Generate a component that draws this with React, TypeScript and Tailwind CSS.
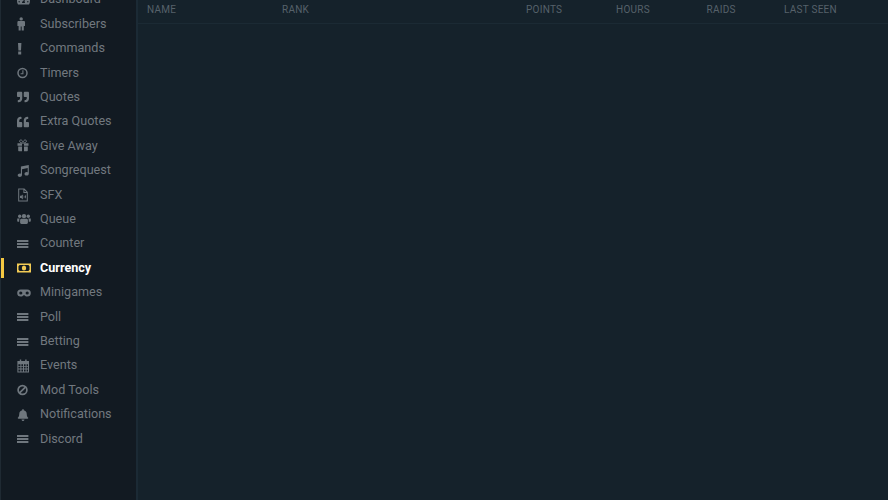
import React from "react";
import { FaQuoteRight, FaQuoteLeft, FaBell, FaTachometerAlt } from "react-icons/fa";

type IconProps = { className?: string };

const Svg = ({ className, children }: IconProps & { children: React.ReactNode }) => (
  <svg viewBox="0 0 14 14" className={className} fill="currentColor">
    {children}
  </svg>
);

const Male = (p: IconProps) => (
  <Svg {...p}>
    <circle cx="4.2" cy="1.9" r="1.7" />
    <path d="M1.6 4h5.2c.7 0 1.2.5 1.2 1.2V9H6.8v4.6H4.7V9.6h-1v4H1.6V9H.4V5.2C.4 4.5.9 4 1.6 4z" />
  </Svg>
);
const Excl = (p: IconProps) => (
  <Svg {...p}>
    <path d="M1 1h3.4l-.4 7.4H1.4zM1.2 9.6h3V12.4h-3z" />
  </Svg>
);
const Clock = (p: IconProps) => (
  <Svg {...p}>
    <circle cx="5.5" cy="7" r="4.5" fill="none" stroke="currentColor" strokeWidth="1.5" />
    <path d="M5.9 4.300v3.400H3.600" fill="none" stroke="currentColor" strokeWidth="1.1" />
  </Svg>
);
const Gift = (p: IconProps) => (
  <Svg {...p}>
    <path d="M.5 4.2h11v2.6H7V4.6H5v2.2H.5zM1.2 7.6H5v4.6H2.2c-.6 0-1-.4-1-1zM7 7.6h3.8v3.6c0 .6-.4 1-1 1H7z" />
    <path d="M6 4C4.5 4 2.6 3.6 2.6 2.2 2.6 1.3 3.3 1 3.9 1 5 1 5.700 2.300 6 3 6.300 2.300 7 1 8.100 1c.6 0 1.300.3 1.300 1.200C9.400 3.600 7.500 4 6 4z" fill="none" stroke="currentColor" strokeWidth="1" />
  </Svg>
);
const Music = (p: IconProps) => (
  <Svg {...p}>
    <path d="M11.800 1v8.700c0 1.200-1.100 1.900-2.200 1.900s-2.100-.7-2.100-1.700 1-1.800 2.100-1.800c.4 0 .8.100 1.100.3V4L5 5.200V11c0 1.200-1.100 1.900-2.200 1.900S.7 12.200.7 11.200s1-1.800 2.100-1.800c.4 0 .8.100 1.100.3V2.600z" />
  </Svg>
);
const FileAudio = (p: IconProps) => (
  <Svg {...p}>
    <path d="M1.200.6h6.200l3.400 3.400v9.400H1.200zM2.200 1.600v10.800h7.600V5H6.400V1.600zM7.400 2v2h2z" fillRule="evenodd" />
    <path d="M3 7.800h1.200L5.800 6.400v5L4.200 10H3zM6.800 7.400c.9.600.9 2.200 0 2.800zM8 6.800c1.400 1 1.400 3 0 4z" />
  </Svg>
);
const Users = (p: IconProps) => (
  <Svg {...p}>
    <circle cx="2.700" cy="4.300" r="1.700" />
    <circle cx="11.300" cy="4.300" r="1.700" />
    <circle cx="7" cy="4.100" r="2.200" />
    <path d="M.2 6.600h2.600c-.5.700-.6 1.500-.6 2.300v.9H1.300C.6 9.800.2 9.400.2 8.800zM13.800 6.600h-2.600c.5.700.6 1.500.6 2.300v.9h.9c.7 0 1.100-.4 1.100-1z" />
    <path d="M4.300 6.800h5.400c.8 0 1.200.7 1.200 1.700v2.100c0 .9-.5 1.400-1.300 1.400H4.400c-.8 0-1.300-.5-1.300-1.400V8.500c0-1 .4-1.700 1.200-1.700z" />
  </Svg>
);
const Bars = (p: IconProps) => (
  <Svg {...p}>
    <path d="M0 2.900h11.400v2H0zM0 6h11.400v2H0zM0 9.100h11.400v2H0z" />
  </Svg>
);
const Money = (p: IconProps) => (
  <Svg {...p}>
    <path fillRule="evenodd" d="M0 2.400h14v9.200H0zM2.600 4.100 1.500 5.300v3.400l1.100 1.200h8.800l1.100-1.200V5.300l-1.100-1.200z" />
    <ellipse cx="7" cy="7" rx="2.200" ry="2.500" />
  </Svg>
);
const Pad = (p: IconProps) => (
  <Svg {...p}>
    <path fillRule="evenodd" d="M3.800 3.400h6.400a3.600 3.600 0 0 1 0 7.200c-1.300 0-2-.6-2.700-1.300h-1c-.7.7-1.400 1.300-2.700 1.300a3.600 3.600 0 0 1 0-7.200zm0 2a1.600 1.600 0 1 0 0 3.200 1.600 1.600 0 0 0 0-3.200zm6.400 0a1.600 1.600 0 1 0 0 3.200 1.600 1.600 0 0 0 0-3.200z" />
  </Svg>
);
const Calendar = (p: IconProps) => (
  <Svg {...p}>
    <path fillRule="evenodd" d="M.4 2h11.600v11.400H.4zM1.400 5.200v1.700h2V5.200zm3 0v1.700h1.600V5.200zm2.600 0v1.700h1.600V5.200zm2.600 0v1.700h1.400V5.200zM1.400 7.800v1.700h2V7.800zm3 0v1.700h1.600V7.800zm2.600 0v1.700h1.600V7.800zm2.600 0v1.700h1.400V7.800zM1.400 10.400v2h2v-2zm3 0v2h1.600v-2zm2.600 0v2h1.600v-2zm2.600 0v2h1.400v-2z" />
    <path d="M2.800.6h1.400v2.800H2.800zM8.200.6h1.400v2.800H8.200z" />
  </Svg>
);
const Ban = (p: IconProps) => (
  <Svg {...p}>
    <circle cx="5.500" cy="7" r="4.400" fill="none" stroke="currentColor" strokeWidth="1.700" />
    <path d="M2.600 9.900l5.800-5.800" fill="none" stroke="currentColor" strokeWidth="1.700" />
  </Svg>
);

const items: { label: string; Icon: React.ComponentType<IconProps>; cls?: string; active?: boolean }[] = [
  { label: "Dashboard", Icon: FaTachometerAlt, cls: "w-[13px] h-[13px]" },
  { label: "Subscribers", Icon: Male },
  { label: "Commands", Icon: Excl },
  { label: "Timers", Icon: Clock },
  { label: "Quotes", Icon: FaQuoteRight, cls: "w-[12px] h-[12px]" },
  { label: "Extra Quotes", Icon: FaQuoteLeft, cls: "w-[12px] h-[12px]" },
  { label: "Give Away", Icon: Gift },
  { label: "Songrequest", Icon: Music },
  { label: "SFX", Icon: FileAudio },
  { label: "Queue", Icon: Users },
  { label: "Counter", Icon: Bars },
  { label: "Currency", Icon: Money, active: true },
  { label: "Minigames", Icon: Pad },
  { label: "Poll", Icon: Bars },
  { label: "Betting", Icon: Bars },
  { label: "Events", Icon: Calendar },
  { label: "Mod Tools", Icon: Ban },
  { label: "Notifications", Icon: FaBell, cls: "w-[12px] h-[12px]" },
  { label: "Discord", Icon: Bars },
];

const cols = ["NAME", "RANK", "POINTS", "HOURS", "RAIDS", "LAST SEEN"];

export default function App() {
  return (
    <div className="flex h-[500px] w-[888px] overflow-hidden bg-[#15222b] font-['Roboto',sans-serif]">
      <aside className="h-full w-[138px] shrink-0 overflow-hidden border-l border-r-2 border-l-[#1f2a33] border-r-[#1b2a35] bg-[#121a22]">
        <ul className="-mt-[12.4px]">
          {items.map(({ label, Icon, cls, active }) => (
            <li key={label} className="relative flex h-[24.41px] items-center">
              {active && <span className="absolute left-0 top-[2px] h-[20px] w-[3px] bg-[#f5c842]" />}
              <span className="ml-[16px] flex w-[23px] shrink-0 items-center justify-start">
                <Icon className={`${cls ?? "w-[14px] h-[14px]"} ${active ? "text-[#f2cb55]" : "text-[#6f777e]"}`} />
              </span>
              <span className={`text-[12.6px] ${active ? "font-bold text-white" : "text-[#71787f]"}`}>{label}</span>
            </li>
          ))}
        </ul>
      </aside>
      <main className="min-w-0 flex-1">
        <div className="grid h-[24px] grid-cols-[135px_244px_90px_90.5px_77.5px_1fr] items-center border-b border-[#1b2a34] pb-[4px] pl-[9px] text-[10px] tracking-[0.25px] text-[#56616a]">
          {cols.map((c) => (
            <span key={c}>{c}</span>
          ))}
        </div>
      </main>
    </div>
  );
}
